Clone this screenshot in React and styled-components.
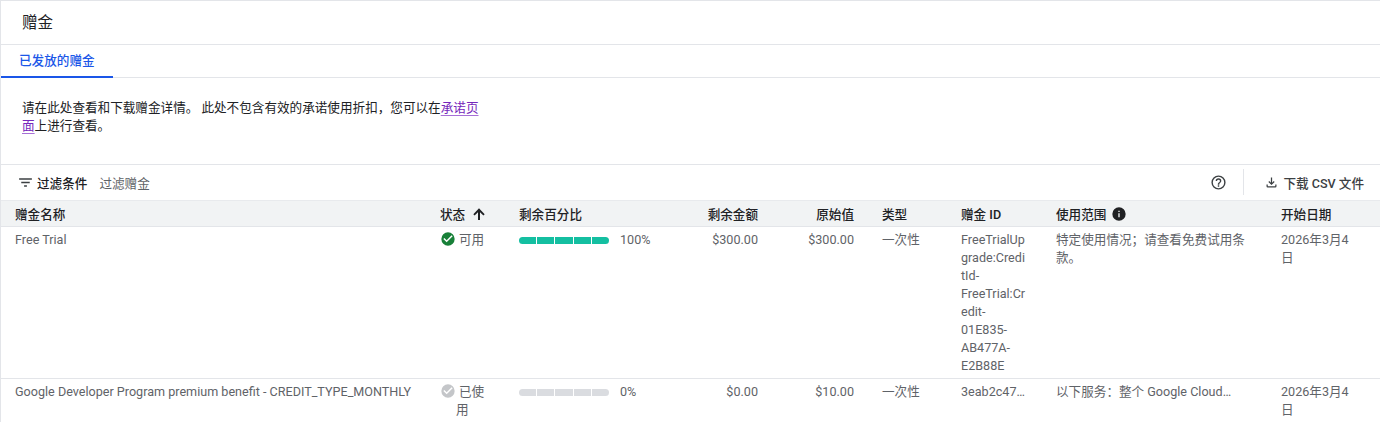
import React from "react";
import styled, { createGlobalStyle } from "styled-components";

const columns = [425, 79, 129, 138, 96, 79, 95, 225, 113];

const GlobalStyle = createGlobalStyle`
  html, body {
    margin: 0;
    height: 100%;
    overflow: hidden;
    background: #fff;
  }
  body {
    font-family: Roboto, "Noto Sans CJK SC", sans-serif;
    font-size: 12.6px;
    color: #202124;
  }
`;

const Page = styled.div`
  border-top: 1px solid #e3e5e9;
  border-left: 1px solid #e3e5e9;
  height: 421px;
  overflow: hidden;
`;

const Header = styled.header`
  height: 44px;
  display: flex;
  align-items: center;
  padding: 0 0 3px 21px;
  box-sizing: border-box;
  font-size: 15.5px;
  border-bottom: 1px solid #e3e5e9;
`;

const Tabs = styled.nav`
  height: 32px;
  display: flex;
  border-bottom: 1px solid #e3e5e9;
`;

const Tab = styled.div`
  width: 112px;
  box-sizing: border-box;
  height: 33px;
  padding: 0 0 0 18px;
  line-height: 31px;
  color: #1a56e8;
  font-weight: 500;
  border-bottom: 2px solid #1a56e8;
`;

const Intro = styled.div`
  height: 87px;
  box-sizing: border-box;
  padding: 21px 0 0 21px;
  border-bottom: 1px solid #e3e5e9;
`;

const IntroText = styled.p`
  margin: 0;
  width: 460px;
  line-height: 18px;
`;

const IntroLink = styled.a`
  color: #7627bb;
  text-decoration: underline;
  text-decoration-color: #a66fd6;
  text-underline-offset: 3px;
`;

const Toolbar = styled.div`
  height: 35px;
  box-sizing: border-box;
  padding: 0 0 1px 16px;
  display: flex;
  align-items: center;
`;

const FilterLabel = styled.span`
  font-weight: 500;
  margin-left: 3px;
`;

const FilterHint = styled.span`
  color: #5f6368;
  margin-left: 12px;
`;

const ToolbarEnd = styled.div`
  margin-left: auto;
  display: flex;
  align-items: center;
  height: 26px;
  padding-right: 16px;
`;

const HelpIcon = styled.svg`
  width: 17px;
  height: 17px;
  margin-right: 16px;
  fill: #3c4043;
`;

const Divider = styled.span`
  width: 1px;
  height: 26px;
  background: #e3e5e9;
  margin-right: 20px;
`;

const DownloadLabel = styled.span`
  font-weight: 500;
  color: #3c4043;
  margin-left: 4px;
`;

const Table = styled.table`
  width: 1379px;
  border-collapse: collapse;
  table-layout: fixed;
`;

const HeadCell = styled.th`
  height: 26px;
  padding: 0 14px;
  box-sizing: border-box;
  background: #f1f3f4;
  border-top: 1px solid #e8eaed;
  border-bottom: 1px solid #e3e5e9;
  font-weight: 500;
  text-align: ${(p) => (p.$right ? "right" : "left")};
  color: #202124;
`;

const Row = styled.tr`
  border-bottom: 1px solid #e3e5e9;
`;

const Cell = styled.td`
  padding: 4px 14px 3px;
  vertical-align: top;
  line-height: 18px;
  color: #5f6368;
  text-align: ${(p) => (p.$right ? "right" : "left")};
`;

const Status = styled.div`
  padding-left: 16px;
`;

const StatusIcon = styled.svg`
  width: 16px;
  height: 16px;
  margin: 0 3px 0 -16px;
  vertical-align: -3px;
  fill: ${(p) => p.$color};
`;

const Usage = styled.div`
  display: flex;
  align-items: center;
  height: 18px;
`;

const Bar = styled.div`
  flex: none;
  width: 90px;
  height: 7px;
  border-radius: 4px;
  overflow: hidden;
  display: flex;
  gap: 1px;
`;

const BarPiece = styled.span`
  flex: 1;
  background: ${(p) => p.$color};
`;

const Percent = styled.span`
  margin-left: 11px;
`;

const HeadInline = styled.span`
  display: inline-flex;
  align-items: center;
`;

const SmallIcon = styled.svg`
  width: ${(p) => p.$size || 14}px;
  height: ${(p) => p.$size || 14}px;
  margin-left: ${(p) => p.$left || 0}px;
  fill: ${(p) => p.$color || "#202124"};
  flex: none;
`;

const IdText = styled.div`
  overflow-wrap: anywhere;
`;

const DateText = styled.div`
  max-width: 72px;
`;

const CheckCircle = ({ color }) => (
  <StatusIcon $color={color} viewBox="0 0 24 24">
    <path d="M12 2a10 10 0 1 0 0 20 10 10 0 0 0 0-20zm-2 15-5-5 1.6-1.6L10 13.8l7.4-7.4L19 8l-9 9z" />
  </StatusIcon>
);

const UsageBar = ({ color, value }) => (
  <Usage>
    <Bar>
      {[0, 1, 2, 3, 4].map((i) => (
        <BarPiece key={i} $color={color} />
      ))}
    </Bar>
    <Percent>{value}</Percent>
  </Usage>
);

export default function App() {
  return (
    <Page>
      <GlobalStyle />
      <Header>赠金</Header>
      <Tabs>
        <Tab>已发放的赠金</Tab>
      </Tabs>
      <Intro>
        <IntroText>
          请在此处查看和下载赠金详情。 此处不包含有效的承诺使用折扣，您可以在
          <IntroLink href="#">承诺页面</IntroLink>上进行查看。
        </IntroText>
      </Intro>
      <Toolbar>
        <SmallIcon viewBox="0 0 24 24" $size={17} $color="#3c4043">
          <path d="M3 6h18v2H3zM6 11h12v2H6zM10 16h4v2h-4z" />
        </SmallIcon>
        <FilterLabel>过滤条件</FilterLabel>
        <FilterHint>过滤赠金</FilterHint>
        <ToolbarEnd>
          <HelpIcon viewBox="0 0 24 24">
            <path d="M11 18h2v-2h-2v2zm1-16a10 10 0 1 0 0 20 10 10 0 0 0 0-20zm0 18a8 8 0 1 1 0-16 8 8 0 0 1 0 16zm0-14a4 4 0 0 0-4 4h2a2 2 0 1 1 4 0c0 2-3 1.75-3 5h2c0-2.25 3-2.5 3-5a4 4 0 0 0-4-4z" />
          </HelpIcon>
          <Divider />
          <SmallIcon viewBox="0 0 24 24" $size={15} $color="#3c4043">
            <path d="M18 15v3H6v-3H4v3a2 2 0 0 0 2 2h12a2 2 0 0 0 2-2v-3h-2zm-1-4-1.4-1.4L13 12.2V4h-2v8.2L8.4 9.6 7 11l5 5 5-5z" />
          </SmallIcon>
          <DownloadLabel>下载 CSV 文件</DownloadLabel>
        </ToolbarEnd>
      </Toolbar>
      <Table>
        <colgroup>
          {columns.map((width, i) => (
            <col key={i} style={{ width }} />
          ))}
        </colgroup>
        <thead>
          <tr>
            <HeadCell>赠金名称</HeadCell>
            <HeadCell>
              <HeadInline>
                状态
                <SmallIcon viewBox="0 0 24 24" $size={16} $left={6}>
                  <path d="M3.5 12.5l1.9 1.9 5.1-5.1V21h3V9.3l5.1 5.1 1.9-1.9L12 3.5z" />
                </SmallIcon>
              </HeadInline>
            </HeadCell>
            <HeadCell>剩余百分比</HeadCell>
            <HeadCell $right>剩余金额</HeadCell>
            <HeadCell $right>原始值</HeadCell>
            <HeadCell>类型</HeadCell>
            <HeadCell>赠金 ID</HeadCell>
            <HeadCell>
              <HeadInline>
                使用范围
                <SmallIcon viewBox="0 0 24 24" $size={16} $left={5}>
                  <path d="M12 2a10 10 0 1 0 0 20 10 10 0 0 0 0-20zm1 15h-2v-6h2v6zm0-8h-2V7h2v2z" />
                </SmallIcon>
              </HeadInline>
            </HeadCell>
            <HeadCell>开始日期</HeadCell>
          </tr>
        </thead>
        <tbody>
          <Row>
            <Cell>Free Trial</Cell>
            <Cell>
              <Status>
                <CheckCircle color="#188038" />可用
              </Status>
            </Cell>
            <Cell>
              <UsageBar color="#14bfa1" value="100%" />
            </Cell>
            <Cell $right>$300.00</Cell>
            <Cell $right>$300.00</Cell>
            <Cell>一次性</Cell>
            <Cell>
              <IdText>FreeTrialUpgrade:CreditId-FreeTrial:Credit-01E835-AB477A-E2B88E</IdText>
            </Cell>
            <Cell>特定使用情况；请查看免费试用条款。</Cell>
            <Cell>
              <DateText>2026年3月4日</DateText>
            </Cell>
          </Row>
          <Row>
            <Cell>Google Developer Program premium benefit - CREDIT_TYPE_MONTHLY</Cell>
            <Cell>
              <Status>
                <CheckCircle color="#c4c6c9" />已使用
              </Status>
            </Cell>
            <Cell>
              <UsageBar color="#dadce0" value="0%" />
            </Cell>
            <Cell $right>$0.00</Cell>
            <Cell $right>$10.00</Cell>
            <Cell>一次性</Cell>
            <Cell>3eab2c47…</Cell>
            <Cell>以下服务：整个 Google Cloud…</Cell>
            <Cell>
              <DateText>2026年3月4日</DateText>
            </Cell>
          </Row>
        </tbody>
      </Table>
    </Page>
  );
}
